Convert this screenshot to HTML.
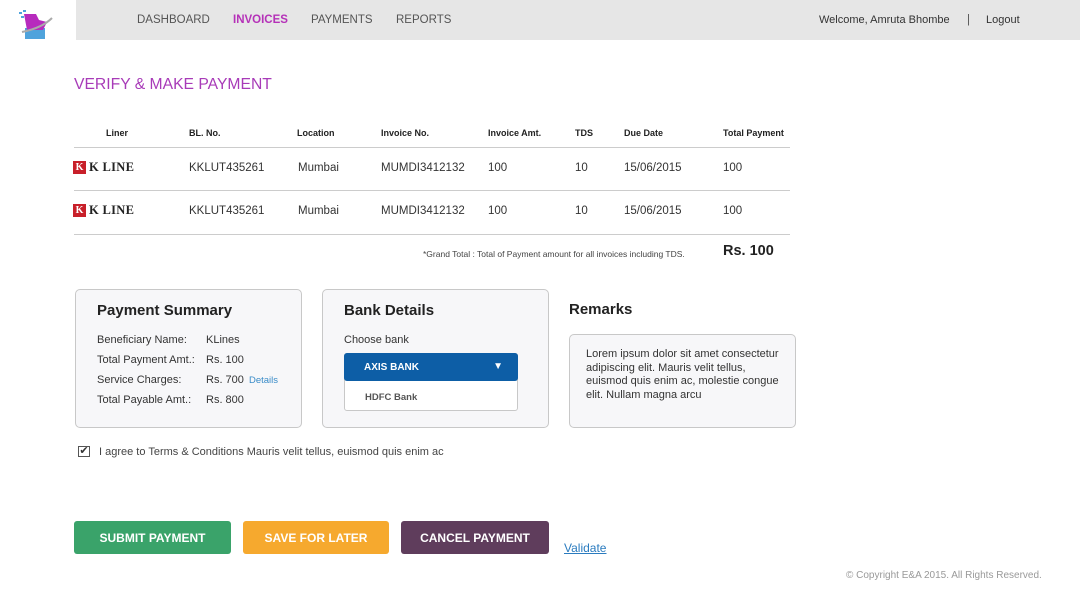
<!DOCTYPE html>
<html><head><style>
*{margin:0;padding:0;box-sizing:border-box}
body{width:1080px;height:608px;background:#fff;font-family:"Liberation Sans",sans-serif;color:#333;position:relative;overflow:hidden}
.a{position:absolute;white-space:nowrap}
.nav{position:absolute;left:76px;top:0;width:1004px;height:40px;background:#e6e6e6}
.nav span{position:absolute;top:14px;font-size:11.5px;color:#555}
.th{font-size:9px;font-weight:bold;color:#222;top:128px}
.td{font-size:11.5px;color:#333}
.hr{position:absolute;left:74px;width:716px;height:1px;background:#ccc}
.box{position:absolute;top:289px;width:227px;height:139px;background:#f7f7f9;border:1px solid #c8c8c8;border-radius:5px}
.box h3{position:absolute;left:21px;top:12px;font-size:15px;color:#222}
.lbl{font-size:11px;color:#333}
.btn{position:absolute;top:521px;height:33px;color:#fff;font-weight:bold;font-size:12px;text-align:center;line-height:34px;border-radius:3px}
.kl{position:absolute;left:73px;width:75px;height:14px}
.kl b{position:absolute;left:0;top:1px;width:13px;height:13px;background:#c8202a;color:#fff;font-size:10px;text-align:center;line-height:13px;font-family:"Liberation Serif",serif}
.kl i{position:absolute;left:16px;top:0px;font-style:normal;font-family:"Liberation Serif",serif;font-weight:bold;font-size:12.5px;color:#222;letter-spacing:0.3px}
</style></head><body>
<svg class="a" style="left:18px;top:10px" width="36" height="32" viewBox="0 0 36 32"><rect x="7" y="18" width="20" height="11" fill="#4fa3dc"/><path d="M6 4h12l3 6 8 2-4 8H9z" fill="#b72bbd"/><path d="M4 22c10-2 22-6 30-14" stroke="#aaa" stroke-width="2" fill="none"/><rect x="1" y="2" width="3" height="2" fill="#4fa3dc"/><rect x="5" y="0" width="3" height="2" fill="#4fa3dc"/><rect x="3" y="6" width="3" height="2" fill="#4fa3dc"/></svg>
<div class="nav">
<span style="left:61px">DASHBOARD</span>
<span style="left:157px;color:#b531b8;font-weight:bold">INVOICES</span>
<span style="left:235px">PAYMENTS</span>
<span style="left:320px">REPORTS</span>
<span style="left:743px;font-size:11px;color:#333">Welcome, Amruta Bhombe</span>
<span style="left:891px">|</span>
<span style="left:910px;font-size:11px;color:#333">Logout</span>
</div>
<div class="a" style="left:74px;top:76px;font-size:15.7px;color:#a83bb8">VERIFY &amp; MAKE PAYMENT</div>
<div class="a th" style="left:106px">Liner</div>
<div class="a th" style="left:189px">BL. No.</div>
<div class="a th" style="left:297px">Location</div>
<div class="a th" style="left:381px">Invoice No.</div>
<div class="a th" style="left:488px">Invoice Amt.</div>
<div class="a th" style="left:575px">TDS</div>
<div class="a th" style="left:624px">Due Date</div>
<div class="a th" style="left:723px">Total Payment</div>
<div class="hr" style="top:147px"></div>
<div class="hr" style="top:190px"></div>
<div class="hr" style="top:234px"></div>
<div class="kl" style="top:160px"><b>K</b><i>K LINE</i></div>
<div class="kl" style="top:203px"><b>K</b><i>K LINE</i></div>
<div class="a td" style="left:189px;top:162px">KKLUT435261</div><div class="a td" style="left:298px;top:162px">Mumbai</div><div class="a td" style="left:381px;top:162px">MUMDI3412132</div><div class="a td" style="left:488px;top:162px">100</div><div class="a td" style="left:575px;top:162px">10</div><div class="a td" style="left:624px;top:162px">15/06/2015</div><div class="a td" style="left:723px;top:162px">100</div>
<div class="a td" style="left:189px;top:205px">KKLUT435261</div><div class="a td" style="left:298px;top:205px">Mumbai</div><div class="a td" style="left:381px;top:205px">MUMDI3412132</div><div class="a td" style="left:488px;top:205px">100</div><div class="a td" style="left:575px;top:205px">10</div><div class="a td" style="left:624px;top:205px">15/06/2015</div><div class="a td" style="left:723px;top:205px">100</div>
<div class="a" style="left:423px;top:249px;font-size:8.5px;color:#444">*Grand Total : Total of Payment amount for all invoices including TDS.</div>
<div class="a" style="left:723px;top:243px;font-size:14.5px;font-weight:bold;color:#222">Rs. 100</div>
<div class="box" style="left:75px"><h3>Payment Summary</h3>
<div class="a lbl" style="left:21px;top:44px">Beneficiary Name:</div><div class="a lbl" style="left:130px;top:44px">KLines</div>
<div class="a lbl" style="left:21px;top:64px">Total Payment Amt.:</div><div class="a lbl" style="left:130px;top:64px">Rs. 100</div>
<div class="a lbl" style="left:21px;top:84px">Service Charges:</div><div class="a lbl" style="left:130px;top:84px">Rs. 700 <span style="font-size:9.5px;color:#3a8cc8;margin-left:2px">Details</span></div>
<div class="a lbl" style="left:21px;top:104px">Total Payable Amt.:</div><div class="a lbl" style="left:130px;top:104px">Rs. 800</div>
</div>
<div class="box" style="left:322px"><h3>Bank Details</h3>
<div class="a lbl" style="left:21px;top:44px">Choose bank</div>
<div class="a" style="left:21px;top:63px;width:174px;height:58px;background:#fff;border:1px solid #c8c8c8;border-radius:3px"></div>
<div class="a" style="left:21px;top:63px;width:174px;height:28px;background:#0d5ea6;border-radius:3px;color:#fff;font-size:10px;font-weight:bold;padding:9px 0 0 20px">AXIS BANK<span style="position:absolute;right:15px;top:8px;font-size:10px">▼</span></div>
<div class="a" style="left:42px;top:102px;font-size:9.5px;color:#555;font-weight:bold">HDFC Bank</div>
</div>
<div class="a" style="left:569px;top:301px;font-size:15px;font-weight:bold;color:#222">Remarks</div>
<div class="a" style="left:569px;top:334px;width:227px;height:94px;background:#f7f7f9;border:1px solid #c8c8c8;border-radius:5px;white-space:normal;padding:13px 14px 0 16px;font-size:11px;line-height:13.5px;color:#333">Lorem ipsum dolor sit amet consectetur adipiscing elit. Mauris velit tellus, euismod quis enim ac, molestie congue elit. Nullam magna arcu</div>
<div class="a" style="left:78px;top:446px;width:12px;height:11px;border:1px solid #555;font-size:11px;line-height:9px;text-align:center">✔</div>
<div class="a" style="left:99px;top:446px;font-size:11px;color:#444">I agree to Terms &amp; Conditions Mauris velit tellus, euismod quis enim ac</div>
<div class="btn" style="left:74px;width:157px;background:#3aa36a">SUBMIT PAYMENT</div>
<div class="btn" style="left:243px;width:146px;background:#f6a92e">SAVE FOR LATER</div>
<div class="btn" style="left:401px;width:148px;background:#5f3d5c">CANCEL PAYMENT</div>
<div class="a" style="left:564px;top:541px;font-size:12px;color:#2a7bbf;text-decoration:underline">Validate</div>
<div class="a" style="left:846px;top:570px;font-size:10px;color:#999">© Copyright E&amp;A 2015. All Rights Reserved.</div>
</body></html>
